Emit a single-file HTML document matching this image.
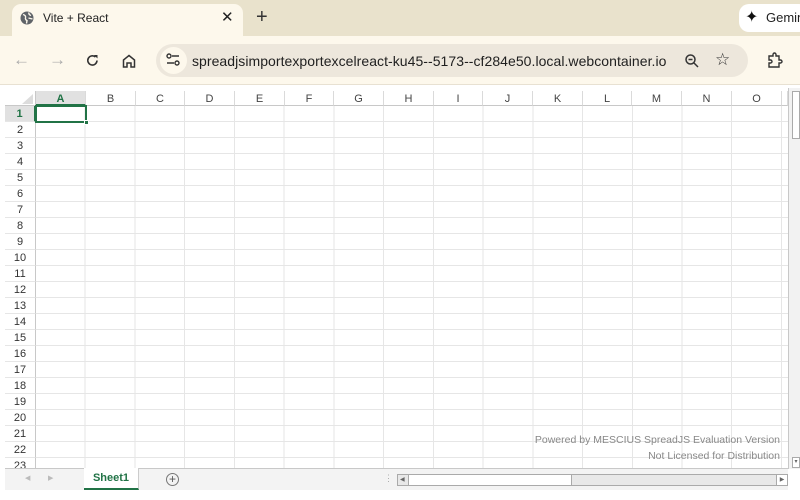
<!DOCTYPE html>
<html><head><meta charset="utf-8"><style>
*{margin:0;padding:0;box-sizing:border-box}
body{width:800px;height:500px;overflow:hidden;background:#fff;font-family:"Liberation Sans",sans-serif;position:relative}
.a{position:absolute}
#top{left:0;top:0;width:800px;height:36px;background:#e9e2cc}
#tab{left:12px;top:4px;width:231px;height:34px;background:#fdf8ec;border-radius:9px 9px 0 0}
#tb{left:0;top:36px;width:800px;height:49px;background:#fdf8ec;border-bottom:1px solid #e8e1d2}
#omni{left:156px;top:44px;width:592px;height:33px;background:#ede7dc;border-radius:17px}
.hdr{top:91px;height:15px;background:#fff;font-size:11px;color:#444;text-align:center;line-height:15px;padding-top:1px;border-right:1px solid #dadada;border-bottom:1px solid #c8c8c8}
#rows div{height:16px;line-height:17px;font-size:11px;color:#333;text-align:center;border-bottom:1px solid #e6e6e6;border-right:1px solid #c8c8c8;width:31px}
#grid{left:36px;top:106px;width:752px;height:363px;
background-image:repeating-linear-gradient(to right,transparent 0,transparent 48.73px,#e6e6e6 48.73px,#e6e6e6 49.73px),repeating-linear-gradient(to bottom,transparent 0,transparent 15px,#e6e6e6 15px,#e6e6e6 16px)}
</style></head><body>
<div class="a" id="top"></div>
<div class="a" id="tab"></div>
<svg class="a" style="left:20px;top:11px" width="14" height="14" viewBox="0 0 14 14"><circle cx="7" cy="7" r="6.5" fill="#5f6368"/><path d="M3 3.5 C5 4 6 5 5.5 7 C5 8 6 9 7 9.5 L6.5 12.5 M9 1.5 C8.5 3 9.5 4 11 4.5 M8.5 7 L12.5 8" stroke="#fdf8ec" stroke-width="1.4" fill="none"/></svg>
<div class="a" style="left:43px;top:11px;font-size:12px;color:#222">Vite + React</div>
<div class="a" style="left:221px;top:8px;font-size:15px;color:#222">✕</div>
<div class="a" style="left:256px;top:6px;font-size:20px;color:#333">+</div>
<div class="a" style="left:739px;top:4px;width:70px;height:28px;background:#fff;border-radius:10px"></div>
<div class="a" style="left:745px;top:7px;font-size:16px;color:#111">✦</div>
<div class="a" style="left:766px;top:10px;font-size:13px;color:#222">Gemini</div>
<div class="a" id="tb"></div>
<div class="a" style="left:13px;top:50px;font-size:17px;color:#aaa">←</div>
<div class="a" style="left:49px;top:50px;font-size:17px;color:#aaa">→</div>
<svg class="a" style="left:85px;top:53px" width="15" height="15" viewBox="0 0 15 15"><path d="M12 7.5 A4.6 4.6 0 1 1 10.5 4" stroke="#333" stroke-width="1.6" fill="none"/><path d="M9 2 L12.5 2 L12.5 5.5 Z" fill="#333"/></svg>
<svg class="a" style="left:121px;top:53px" width="16" height="16" viewBox="0 0 16 16"><path d="M2.5 7 L8 2.5 L13.5 7 L13.5 14 L10 14 L10 10 L6 10 L6 14 L2.5 14 Z" stroke="#333" stroke-width="1.5" fill="none"/></svg>
<div class="a" id="omni"></div>
<div class="a" style="left:160px;top:47px;width:27px;height:27px;background:#fdf8ec;border-radius:50%"></div>
<svg class="a" style="left:165px;top:53px" width="16" height="14" viewBox="0 0 16 14"><circle cx="4" cy="3" r="2" stroke="#333" stroke-width="1.4" fill="none"/><path d="M7 3 H14 M2 10 H9" stroke="#333" stroke-width="1.4"/><circle cx="12" cy="10" r="2" stroke="#333" stroke-width="1.4" fill="none"/></svg>
<div class="a" style="left:192px;top:53px;font-size:14px;color:#1f1f1f;letter-spacing:0.05px">spreadjsimportexportexcelreact-ku45--5173--cf284e50.local.webcontainer.io</div>
<svg class="a" style="left:684px;top:53px" width="16" height="16" viewBox="0 0 16 16"><circle cx="6.5" cy="6.5" r="4.5" stroke="#333" stroke-width="1.5" fill="none"/><path d="M10 10 L14 14 M4.5 6.5 H8.5" stroke="#333" stroke-width="1.5"/></svg>
<div class="a" style="left:715px;top:50px;font-size:17px;color:#333">☆</div>
<svg class="a" style="left:766px;top:52px" width="18" height="18" viewBox="0 0 18 18"><path d="M3 4 H7 V2.5 A1.5 1.5 0 0 1 10 2.5 V4 H13 V8 H14.5 A1.5 1.5 0 0 1 14.5 11 H13 V15 H3 V11 H4.5 A1.5 1.5 0 0 0 4.5 8 H3 Z" stroke="#333" stroke-width="1.4" fill="none"/></svg>

<div class="a" style="left:5px;top:91px;width:31px;height:15px;background:#fff;border-right:1px solid #c8c8c8;border-bottom:1px solid #c8c8c8"></div>
<div class="a" style="left:22px;top:94px;width:0;height:0;border-left:11px solid transparent;border-bottom:10px solid #dcdcdc"></div>
<div class="a hdr" style="left:36px;width:50px;background:#e1e1e1;color:#217346;font-weight:bold;border-bottom:2px solid #217346">A</div>
<div class="a hdr" style="left:86px;width:50px">B</div>
<div class="a hdr" style="left:136px;width:49px">C</div>
<div class="a hdr" style="left:185px;width:50px">D</div>
<div class="a hdr" style="left:235px;width:50px">E</div>
<div class="a hdr" style="left:285px;width:49px">F</div>
<div class="a hdr" style="left:334px;width:50px">G</div>
<div class="a hdr" style="left:384px;width:50px">H</div>
<div class="a hdr" style="left:434px;width:49px">I</div>
<div class="a hdr" style="left:483px;width:50px">J</div>
<div class="a hdr" style="left:533px;width:50px">K</div>
<div class="a hdr" style="left:583px;width:49px">L</div>
<div class="a hdr" style="left:632px;width:50px">M</div>
<div class="a hdr" style="left:682px;width:50px">N</div>
<div class="a hdr" style="left:732px;width:50px">O</div>
<div class="a hdr" style="left:782px;width:6px"></div>
<div class="a" id="rows" style="left:5px;top:106px;height:363px;overflow:hidden">
<div style="background:#e1e1e1;color:#217346;font-weight:bold;border-right:2px solid #217346">1</div><div>2</div><div>3</div><div>4</div><div>5</div><div>6</div><div>7</div><div>8</div><div>9</div><div>10</div><div>11</div><div>12</div><div>13</div><div>14</div><div>15</div><div>16</div><div>17</div><div>18</div><div>19</div><div>20</div><div>21</div><div>22</div><div>23</div>
</div>
<div class="a" id="grid"></div>
<div class="a" style="left:35px;top:105px;width:52px;height:18px;border:2px solid #217346"></div>
<div class="a" style="left:84px;top:120px;width:5px;height:5px;background:#217346;border:1px solid #fff"></div>
<div class="a" style="left:480px;top:432px;font-size:10.5px;color:#888;text-align:right;width:300px;line-height:16px;white-space:nowrap">Powered by MESCIUS SpreadJS Evaluation Version<br>Not Licensed for Distribution</div>
<div class="a" style="left:788px;top:88px;width:12px;height:381px;background:#f2f2f2;border-left:1px solid #c8c8c8"></div>
<div class="a" style="left:792px;top:91px;width:8px;height:48px;background:#fff;border:1px solid #aaa"></div>
<div class="a" style="left:792px;top:457px;width:8px;height:11px;background:#fff;border:1px solid #aaa;font-size:6px;color:#666;text-align:center">▾</div>
<div class="a" style="left:5px;top:468px;width:783px;height:22px;background:#f3f3f3;border-top:1px solid #c8c8c8"></div>
<div class="a" style="left:25px;top:474px;font-size:7px;color:#bbb">◀</div>
<div class="a" style="left:48px;top:474px;font-size:7px;color:#bbb">▶</div>
<div class="a" style="left:84px;top:468px;width:55px;height:22px;background:#fff;border-bottom:2px solid #217346;border-right:1px solid #ccc;font-size:11px;font-weight:bold;color:#217346;text-align:center;line-height:21px">Sheet1</div>
<div class="a" style="left:166px;top:473px;width:13px;height:13px;border:1px solid #777;border-radius:50%;font-size:12px;line-height:10px;text-align:center;color:#555">+</div>
<div class="a" style="left:384px;top:473px;font-size:9px;color:#aaa">⋮</div>
<div class="a" style="left:397px;top:474px;width:391px;height:12px;background:#e8e8e8;border:1px solid #aaa"></div>
<div class="a" style="left:408px;top:474px;width:164px;height:12px;background:#fff;border:1px solid #aaa"></div>
<div class="a" style="left:400px;top:476px;font-size:6px;color:#666">◀</div>
<div class="a" style="left:776px;top:474px;width:12px;height:12px;background:#fff;border:1px solid #aaa;font-size:6px;color:#666;text-align:center;line-height:10px">▶</div>
</body></html>
